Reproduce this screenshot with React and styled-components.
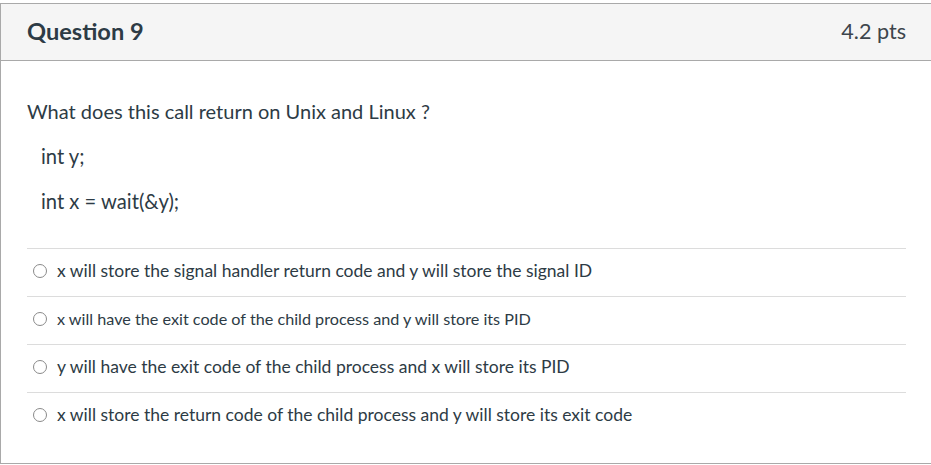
import styled, { createGlobalStyle } from "styled-components";

const GlobalStyle = createGlobalStyle`
    html, body {
        margin: 0;
        padding: 0;
        background: #fff;
        overflow: hidden;
    }
    body {
        font-family: Lato, "Open Sans", sans-serif;
        color: #2d3b45;
    }
`;

const Page = styled.div`
    padding-top: 3px;
`;

const Card = styled.div`
    width: 931px;
    box-sizing: border-box;
    border: 1px solid #a9a9a9;
    border-right: none;
    height: 461px;
`;

const Header = styled.div`
    display: flex;
    align-items: center;
    justify-content: space-between;
    height: 57px;
    padding: 0 25px 2px 26px;
    box-sizing: border-box;
    background: #f5f5f5;
    border-bottom: 1px solid #a9a9a9;
`;

const Title = styled.h2`
    margin: 0;
    font-size: 23.6px;
    font-weight: 700;
    color: #2d3b45;
`;

const Points = styled.div`
    font-size: 21.6px;
    font-weight: 400;
    color: #3d454c;
`;

const Body = styled.div`
    padding: 38px 25px 0 26px;
`;

const Prompt = styled.p`
    margin: 0;
    font-size: 20px;
    line-height: 24px;
`;

const CodeLine = styled.p`
    margin: 21px 0 0 14px;
    font-size: 20.2px;
    line-height: 24px;
`;

const Answers = styled.div`
    margin-top: 35px;
`;

const Answer = styled.label`
    display: flex;
    align-items: center;
    gap: 10px;
    height: 48px;
    box-sizing: border-box;
    padding: 0 0 5px 6px;
    border-top: 1px solid #dcdcdc;
    font-size: ${(p) => p.$size || 17.5}px;
    color: #2d3b45;
`;

const Radio = styled.span`
    width: 12px;
    height: 12px;
    margin-top: 2px;
    border-radius: 50%;
    border: 1.5px solid #8a8a8a;
    flex-shrink: 0;
`;

const answers = [
    { text: "x will store the signal handler return code and y will store the signal ID" },
    { text: "x will have the exit code of the child process and y will store its PID", size: 16.2 },
    { text: "y will have the exit code of the child process and x will store its PID" },
    { text: "x will store the return code of the child process and y will store its exit code" },
];

export default function App() {
    return (
        <Page>
            <GlobalStyle />
            <Card>
                <Header>
                    <Title>Question 9</Title>
                    <Points>4.2 pts</Points>
                </Header>
                <Body>
                    <Prompt>What does this call return on Unix and Linux ?</Prompt>
                    <CodeLine>int y;</CodeLine>
                    <CodeLine>int x = wait(&amp;y);</CodeLine>
                    <Answers>
                        {answers.map((a, i) => (
                            <Answer key={i} $size={a.size}>
                                <Radio />
                                {a.text}
                            </Answer>
                        ))}
                    </Answers>
                </Body>
            </Card>
        </Page>
    );
}
